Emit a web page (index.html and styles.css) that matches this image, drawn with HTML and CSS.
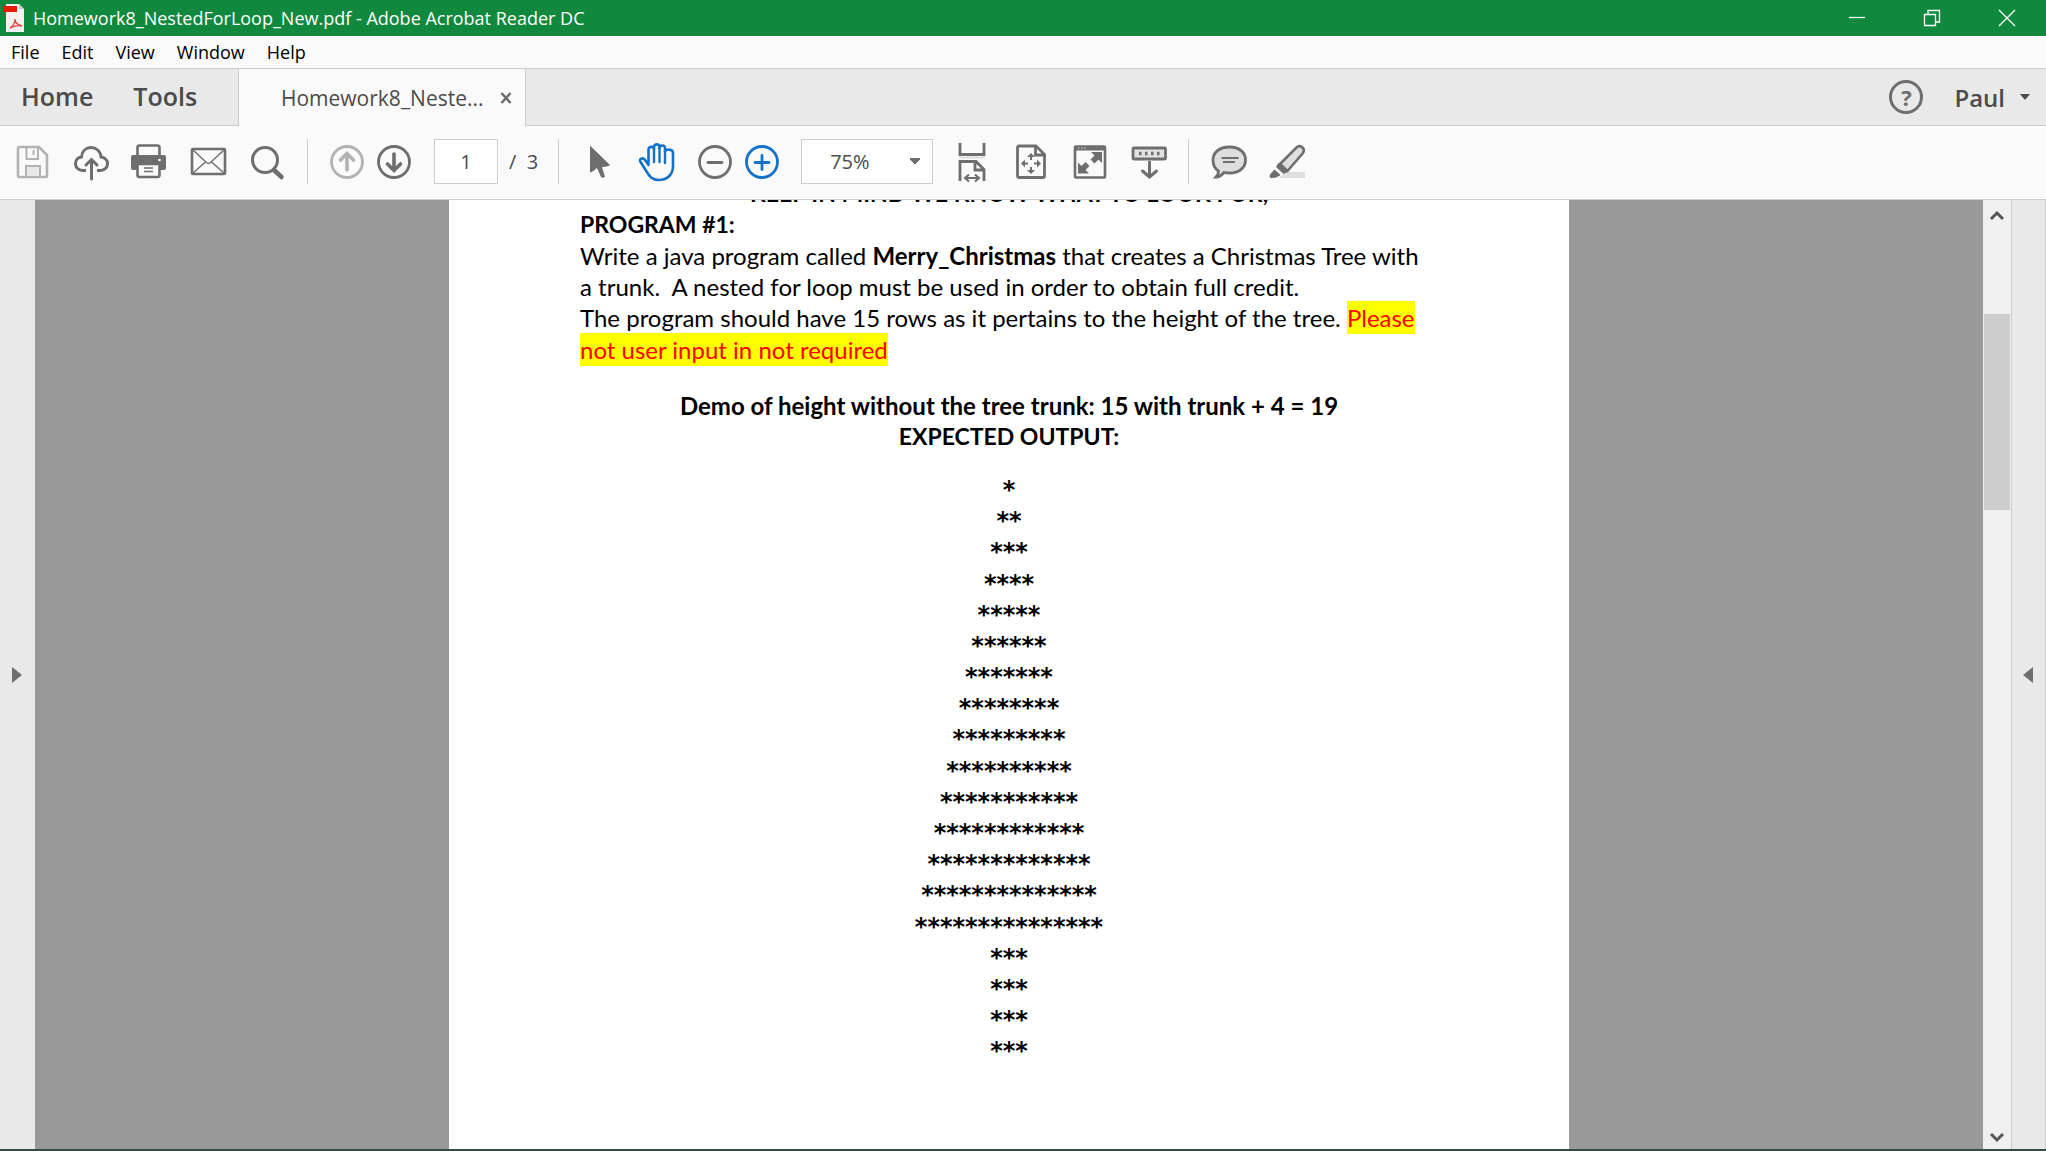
FILE: index.html
```html
<!DOCTYPE html>
<html lang="en">
<head>
	<meta charset="utf-8">
	<title>Homework8_NestedForLoop_New.pdf - Adobe Acrobat Reader DC</title>
	<link rel="stylesheet" href="styles.css">
</head>
<body>

	<header class="titlebar">
		<svg class="app-icon" width="26" height="30" viewBox="0 0 26 30">
			<path d="M5 1h13l5 5v23H5z" fill="#f4f1f0"/>
			<path d="M18 1v5h5z" fill="#c9c9c9"/>
			<path d="M2 3h14v6H2z" fill="#e61b00"/>
			<path d="M9 25c3-2 5-5 5-9 0 4 3 6 7 7-4-1-8 0-12 2z" fill="none" stroke="#e8423a" stroke-width="1.3"/>
		</svg>
		<h1>Homework8_NestedForLoop_New.pdf - Adobe Acrobat Reader DC</h1>
		<div class="window-buttons">
			<button aria-label="Minimize"><svg width="18" height="18" viewBox="0 0 18 18"><path d="M1 8.500h16"/></svg></button>
			<button aria-label="Restore"><svg width="18" height="18" viewBox="0 0 18 18"><path d="M1.500 5.500h11v11h-11zM5 5V1.500h11.500v11.500H13"/></svg></button>
			<button aria-label="Close"><svg width="18" height="18" viewBox="0 0 18 18"><path d="M1 1l16 16M17 1L1 17"/></svg></button>
		</div>
	</header>

	<nav class="menubar">
		<button>File</button>
		<button>Edit</button>
		<button>View</button>
		<button>Window</button>
		<button>Help</button>
	</nav>

	<div class="tabs">
		<div class="main-tabs">
			<button>Home</button>
			<button>Tools</button>
		</div>
		<div class="doc-tab">
			<span>Homework8_Neste...</span>
			<button aria-label="Close tab"><svg width="12" height="12" viewBox="0 0 12 12"><path d="M1.500 1l9 10M10.500 1l-9 10" stroke="#6e6e6e" stroke-width="2.600"/></svg></button>
		</div>
		<div class="account">
			<button aria-label="Help" class="help">?</button>
			<button class="user">Paul <svg width="12" height="8" viewBox="0 0 12 8"><path d="M1 1h10L6 7z" fill="#4b4b4b"/></svg></button>
		</div>
	</div>

	<div class="toolbar">
		<div class="group file-group">
			<button aria-label="Save" disabled>
				<svg width="36" height="40" viewBox="0 0 36 40"><path d="M4 5h20l8 8v21a1 1 0 0 1-1 1H4a1 1 0 0 1-1-1V6a1 1 0 0 1 1-1z" fill="none" stroke="#b2b2b2" stroke-width="2.600"/><path d="M11.500 5v12h11.500V5M18.500 8v5" fill="none" stroke="#b2b2b2" stroke-width="2"/><path d="M11 34V24h14v10" fill="#e8e8e8" stroke="#b2b2b2" stroke-width="2"/></svg>
			</button>
			<button aria-label="Upload">
				<svg width="36" height="40" viewBox="0 0 36 40"><path d="M13 28.500H9.500C5 28 2.500 25.500 2.500 21.500c0-3.500 2.500-6 6-6.500C9 9 13 5.500 18 5.500S27.500 9 28 15c3.500.5 6.500 3 6.500 6.500 0 4-3 6.500-7 7H24" fill="none" stroke="#6e6e6e" stroke-width="3"/><path d="M18.500 37V18M13 23l5.500-5.500L24 23" fill="none" stroke="#6e6e6e" stroke-width="3" stroke-linecap="round"/></svg>
			</button>
			<button aria-label="Print">
				<svg width="36" height="40" viewBox="0 0 36 40"><path d="M6.500 14V5.500a2 2 0 0 1 2-2h18a2 2 0 0 1 2 2V14" fill="none" stroke="#6e6e6e" stroke-width="2.600"/><path d="M2 13h31q2 0 2 2v11q0 2-2 2H2q-2 0-2-2V15q0-2 2-2z" fill="#6e6e6e"/><circle cx="28.500" cy="18" r="1.300" fill="#fff"/><path d="M6.500 22h22v11q0 2-2 2h-18q-2 0-2-2z" fill="#fafafa" stroke="#6e6e6e" stroke-width="2.600"/><path d="M13 26h9M13 29.500h9" stroke="#6e6e6e" stroke-width="1.600"/></svg>
			</button>
			<button aria-label="E-mail">
				<svg width="36" height="40" viewBox="0 0 36 40"><path d="M4 7h31a1 1 0 0 1 1 1v23a1 1 0 0 1-1 1H4a1 1 0 0 1-1-1V8a1 1 0 0 1 1-1z" fill="none" stroke="#6e6e6e" stroke-width="2.600"/><path d="M4 8l14 13q1.500 1 3 0L35 8M4 31l12.500-11M35 31L22.500 20" fill="none" stroke="#6e6e6e" stroke-width="1.400"/></svg>
			</button>
			<button aria-label="Find">
				<svg width="36" height="40" viewBox="0 0 36 40"><circle cx="18" cy="18" r="12.500" fill="none" stroke="#6e6e6e" stroke-width="3"/><path d="M27 28l7.500 7" stroke="#6e6e6e" stroke-width="4.500" stroke-linecap="round"/></svg>
			</button>
		</div>
		<div class="separator"></div>
		<div class="group page-group">
			<button aria-label="Previous page" disabled>
				<svg width="36" height="40" viewBox="0 0 36 40"><g fill="none" stroke="#b2b2b2" stroke-width="2.800"><circle cx="18" cy="20" r="15.500"/><path d="M18 28V12M11.500 18l6.500-6.500L24.500 18" stroke-width="3.600" stroke-linecap="round"/></g></svg>
			</button>
			<button aria-label="Next page">
				<svg width="36" height="40" viewBox="0 0 36 40"><g fill="none" stroke="#6e6e6e" stroke-width="2.800"><circle cx="18" cy="20" r="15.500"/><path d="M18 12v16M11.500 22l6.500 6.500 6.500-6.500" stroke-width="3.600" stroke-linecap="round"/></g></svg>
			</button>
			<input type="text" class="page-number" value="1" aria-label="Page number">
			<span class="page-count">/&nbsp; 3</span>
		</div>
		<div class="separator"></div>
		<div class="group view-group">
			<button aria-label="Select">
				<svg width="36" height="40" viewBox="0 0 36 40"><path d="M9 3.500v27q1.500 0 7-4.500l4 9q1.500 1.500 4 0l-3-10q7-.5 8-2z" fill="#6e6e6e"/></svg>
			</button>
			<button aria-label="Hand" class="hand">
				<svg width="36" height="40" viewBox="0 0 36 40"><path d="M9.500 23V7.500c0-3.500 5.500-3.500 5.500 0V5c0-3.500 5.500-3.500 5.500 0v1c0-3.500 5.500-3 5.500 0v3.500c0-2.500 8-3 8 1.500v13c0 8-5 14-14.500 14C11 38 9.500 32 6 27L1.500 20c-2-4 3-5 5-1.500z" fill="none" stroke="#1473c8" stroke-width="2.600" stroke-linejoin="round"/><path d="M15 7v13M20.500 6v14M26 9v12" fill="none" stroke="#1473c8" stroke-width="2.400" stroke-linecap="round"/></svg>
			</button>
			<button aria-label="Zoom out">
				<svg width="36" height="40" viewBox="0 0 36 40"><g fill="none" stroke="#6e6e6e" stroke-width="2.800"><circle cx="18" cy="20" r="15.500"/><path d="M11 20.500h14" stroke-linecap="round"/></g></svg>
			</button>
			<button aria-label="Zoom in" class="zoom-in">
				<svg width="36" height="40" viewBox="0 0 36 40"><g fill="none" stroke="#1473c8" stroke-width="2.800"><circle cx="18" cy="20" r="15.500"/><path d="M11 20.500h14M18 13.500v14" stroke-linecap="round"/></g></svg>
			</button>
			<select class="zoom" aria-label="Zoom level">
				<option>75%</option>
			</select>
		</div>
		<div class="group fit-group">
			<button aria-label="Fit width">
				<svg width="36" height="40" viewBox="0 0 36 40"><g fill="none" stroke="#6e6e6e" stroke-width="2.800"><path d="M6 1v11.500h24V1"/><path d="M6 39V19.500h16l8 8V39M21 20v8h9"/><path d="M11 36h14M15 32.500L11 36l4 3.500M21 32.500l4 3.500-4 3.500" stroke-width="2"/></g><path d="M5 15.500h26" stroke="#ddd" stroke-width="2"/></svg>
			</button>
			<button aria-label="Fit page">
				<svg width="36" height="40" viewBox="0 0 36 40"><path d="M6 4h17l8.500 8.500V34q0 1.500-1.500 1.500H6Q4.500 35.500 4.500 34V5.500Q4.500 4 6 4zM22.500 4v9h9" fill="none" stroke="#6e6e6e" stroke-width="2.800"/><path d="M18 14v4M18 25v4M11 21.500h4M21 21.500h4" stroke="#6e6e6e" stroke-width="2"/><path d="M18 11l4 4h-8zM18 32l4-4h-8zM8 21.500l4-4v8zM28 21.500l-4-4v8z" fill="#6e6e6e"/></svg>
			</button>
			<button aria-label="Full screen">
				<svg width="36" height="40" viewBox="0 0 36 40"><rect x="3" y="4.500" width="30" height="31" rx="1" fill="none" stroke="#6e6e6e" stroke-width="2.600"/><path d="M3 6.500h30" stroke="#6e6e6e" stroke-width="4"/><path d="M6 6h8" stroke="#ddd" stroke-dasharray="1.500 1.500"/><path d="M30 10v11l-3.500-3.500-4 4-4-4 4-4L19 10zM6 31.500v-11l3.500 3.500 4-4 4 4-4 4 3.500 3.500z" fill="#6e6e6e"/></svg>
			</button>
			<button aria-label="Read mode">
				<svg width="36" height="40" viewBox="0 0 36 40"><rect x="2" y="6" width="32.500" height="11" rx="1" fill="#e2e2e2" stroke="#6e6e6e" stroke-width="2.800"/><path d="M8 11.500h22" stroke="#6e6e6e" stroke-width="3.500" stroke-dasharray="2.500 3.500"/><path d="M18.500 20v14M11.500 29l7 6 7-6" fill="none" stroke="#6e6e6e" stroke-width="3" stroke-linecap="round"/></svg>
			</button>
		</div>
		<div class="separator"></div>
		<div class="group comment-group">
			<button aria-label="Comment">
				<svg width="36" height="40" viewBox="0 0 36 40"><path d="M18.500 5c10 0 16 5.500 16 13s-6 13-16 13c-2 0-4 0-5.500-.500C10 34 7 35 5 35c2-2 2.500-4 2.500-6C3.500 26.500 2 22.500 2 18 2 10.500 8.500 5 18.500 5z" fill="#dedede" stroke="#6e6e6e" stroke-width="2.800"/><path d="M10.500 16h17M12 20h12" stroke="#6e6e6e" stroke-width="1.800"/></svg>
			</button>
			<button aria-label="Highlight">
				<svg width="36" height="40" viewBox="0 0 36 40"><path d="M10 36l7-6h19v6z" fill="#dedede"/><path d="M11 22L28 5q3-2 5.500.5t.5 5.500L18.500 29z" fill="#dedede" stroke="#6e6e6e" stroke-width="2.600"/><path d="M9.500 21.500l9 8-4 2-7-6.500zM5.500 28l5.500 5q-4 3-9.500 2.500-1-1 0-3z" fill="#6e6e6e" stroke="#6e6e6e"/></svg>
			</button>
		</div>
	</div>

	<main class="workspace">
		<aside class="side-panel left-panel">
			<button aria-label="Show navigation pane"><svg width="10" height="16" viewBox="0 0 10 16"><path d="M0 0l10 8-10 8z" fill="#6e6e6e"/></svg></button>
		</aside>

		<section class="viewer">
			<article class="page">
				<p class="center caps"><strong>KEEP IN MIND WE KNOW WHAT TO LOOK FOR,</strong></p>
				<h2 class="caps">PROGRAM #1:</h2>
				<p>Write a java program called <strong>Merry_Christmas</strong> that creates a Christmas Tree with<br>
				a trunk.&nbsp; A nested for loop must be used in order to obtain full credit.<br>
				The program should have 15 rows as it pertains to the height of the tree. <mark>Please<br>
				not user input in not required</mark></p>
				<div class="demo">
					<h3>Demo of height without the tree trunk: 15 with trunk + 4 = 19</h3>
					<h3 class="caps">EXPECTED OUTPUT:</h3>
				</div>
				<pre class="tree">*
**
***
****
*****
******
*******
********
*********
**********
***********
************
*************
**************
***************
***
***
***
***</pre>
			</article>
		</section>

		<div class="scrollbar">
			<button aria-label="Scroll up"><svg width="14" height="12" viewBox="0 0 14 12"><path d="M1 9l6-6 6 6" fill="none" stroke="#555" stroke-width="3"/></svg></button>
			<div class="track"><div class="thumb"></div></div>
			<button aria-label="Scroll down"><svg width="14" height="12" viewBox="0 0 14 12"><path d="M1 3l6 6 6-6" fill="none" stroke="#555" stroke-width="3"/></svg></button>
		</div>

		<aside class="side-panel right-panel">
			<button aria-label="Show tools pane"><svg width="10" height="16" viewBox="0 0 10 16"><path d="M10 0L0 8l10 8z" fill="#6e6e6e"/></svg></button>
		</aside>
	</main>

	<footer class="taskbar"></footer>

</body>
</html>
```
FILE: styles.css
```css
* {
	box-sizing: border-box;
}

body {
	margin: 0;
	height: 100vh;
	display: flex;
	flex-direction: column;
	overflow: hidden;
	background: #fafafa;
	font-family: "Open Sans", "Noto Sans", sans-serif;
	color: #000;
}

button {
	border: 0;
	padding: 0;
	background: none;
	font: inherit;
	color: inherit;
}

svg {
	display: block;
	overflow: visible;
}

/* window title */
.titlebar {
	height: 36px;
	flex: none;
	display: flex;
	align-items: center;
	background: #10893e;
	color: #fff;
}

.app-icon {
	margin-left: 1px;
}

.titlebar h1 {
	margin: 0 0 0 6px;
	font-size: 18px;
	font-weight: 400;
}

.window-buttons {
	display: flex;
	margin-left: auto;
	padding-right: 2px;
}

.window-buttons button {
	width: 75px;
	height: 36px;
	display: flex;
	align-items: center;
	justify-content: center;
}

.window-buttons path {
	fill: none;
	stroke: #fff;
	stroke-width: 1.3;
}

/* menu */
.menubar {
	height: 32px;
	flex: none;
	display: flex;
	align-items: center;
	gap: 22px;
	padding-left: 11px;
	font-size: 18px;
}

/* tabs */
.tabs {
	height: 58px;
	flex: none;
	display: flex;
	background: #e9e9e9;
	border-top: 1px solid #cdcdcd;
	color: #4b4b4b;
}

.main-tabs {
	width: 239px;
	display: flex;
	align-items: center;
	gap: 40px;
	padding: 0 0 2px 21px;
	border-right: 1px solid #cdcdcd;
	border-bottom: 1px solid #cdcdcd;
	font-size: 25px;
	font-weight: 600;
}

.doc-tab {
	width: 287px;
	display: flex;
	align-items: center;
	gap: 16px;
	padding-left: 42px;
	background: #fafafa;
	border-right: 1px solid #cdcdcd;
	font-size: 21px;
}

.account {
	flex: 1;
	display: flex;
	align-items: center;
	justify-content: flex-end;
	gap: 31px;
	padding-right: 15px;
	border-bottom: 1px solid #cdcdcd;
	font-size: 24px;
	font-weight: 600;
}

.help {
	width: 34px;
	height: 34px;
	border: 3px solid #6e6e6e;
	border-radius: 50%;
	color: #6e6e6e;
	font-size: 22px;
	font-weight: 700;
	line-height: 28px;
}

.user {
	display: flex;
	align-items: center;
	gap: 14px;
}

/* toolbar */
.toolbar {
	height: 74px;
	flex: none;
	display: flex;
	align-items: center;
	padding-bottom: 2px;
	border-bottom: 1px solid #cdcdcd;
	color: #4b4b4b;
	font-size: 20px;
}

.group {
	display: flex;
	align-items: center;
}

.separator {
	width: 1px;
	height: 45px;
	background: #cdcdcd;
}

.file-group {
	gap: 22px;
	padding: 0 24px 0 15px;
}

.page-group {
	gap: 11px;
	padding: 0 20px 0 21px;
}

.page-number {
	width: 64px;
	height: 45px;
	margin-left: 11px;
	border: 1px solid #cdcdcd;
	background: #fff;
	color: inherit;
	font: inherit;
	text-align: center;
}

.view-group {
	padding-left: 22px;
}

.hand {
	margin: 0 22px;
}

.zoom-in {
	margin: 0 21px 0 11px;
}

.zoom {
	width: 132px;
	height: 45px;
	padding-left: 28px;
	border: 1px solid #cdcdcd;
	border-radius: 0;
	appearance: none;
	background: #fff conic-gradient(from -40deg at 50% 100%, #6e6e6e 80deg, transparent 0) no-repeat right 11px center / 12px 7px;
	color: inherit;
	font: inherit;
}

.fit-group {
	gap: 23px;
	padding: 0 21px;
}

.comment-group {
	gap: 22px;
	padding-left: 22px;
}

/* document area */
.workspace {
	flex: 1;
	min-height: 0;
	display: flex;
}

.side-panel {
	flex: none;
	display: flex;
	align-items: center;
	background: #e9e9e9;
}

.left-panel {
	width: 35px;
	padding-left: 12px;
}

.right-panel {
	width: 35px;
	padding-left: 11px;
	border: solid #cdcdcd;
	border-width: 0 1px;
}

.viewer {
	flex: 1;
	overflow: hidden;
	background: #999;
}

.page {
	display: flow-root;
	width: 1120px;
	min-height: 100%;
	margin: 0 auto;
	padding: 0 131px;
	background: #fff;
	font-family: Lato, sans-serif;
	font-size: 24px;
	line-height: 1.3;
}

.page p,
.page h2,
.page h3 {
	margin: 0;
	font-size: inherit;
	white-space: nowrap;
}

.page .caps {
	font-size: 23px;
	line-height: 31px;
}

.page .center {
	margin-top: -22px;
	text-align: center;
}

mark {
	padding: 2px 0;
	background: #ff0;
	color: #f00;
}

.demo {
	margin-top: 25px;
	text-align: center;
}

.tree {
	margin: 23px 0 0;
	font-family: "DejaVu Sans", sans-serif;
	font-weight: 700;
	text-align: center;
}

/* scrollbar */
.scrollbar {
	width: 28px;
	flex: none;
	display: flex;
	flex-direction: column;
	background: #f0f0f0;
}

.scrollbar button {
	height: 32px;
	display: flex;
	align-items: center;
	justify-content: center;
}

.scrollbar button:last-child {
	height: 24px;
}

.track {
	flex: 1;
}

.thumb {
	width: 26px;
	height: 22%;
	margin: 82px auto 0;
	background: #cdcdcd;
}

.taskbar {
	height: 2px;
	flex: none;
	background: #304f42;
}
```
